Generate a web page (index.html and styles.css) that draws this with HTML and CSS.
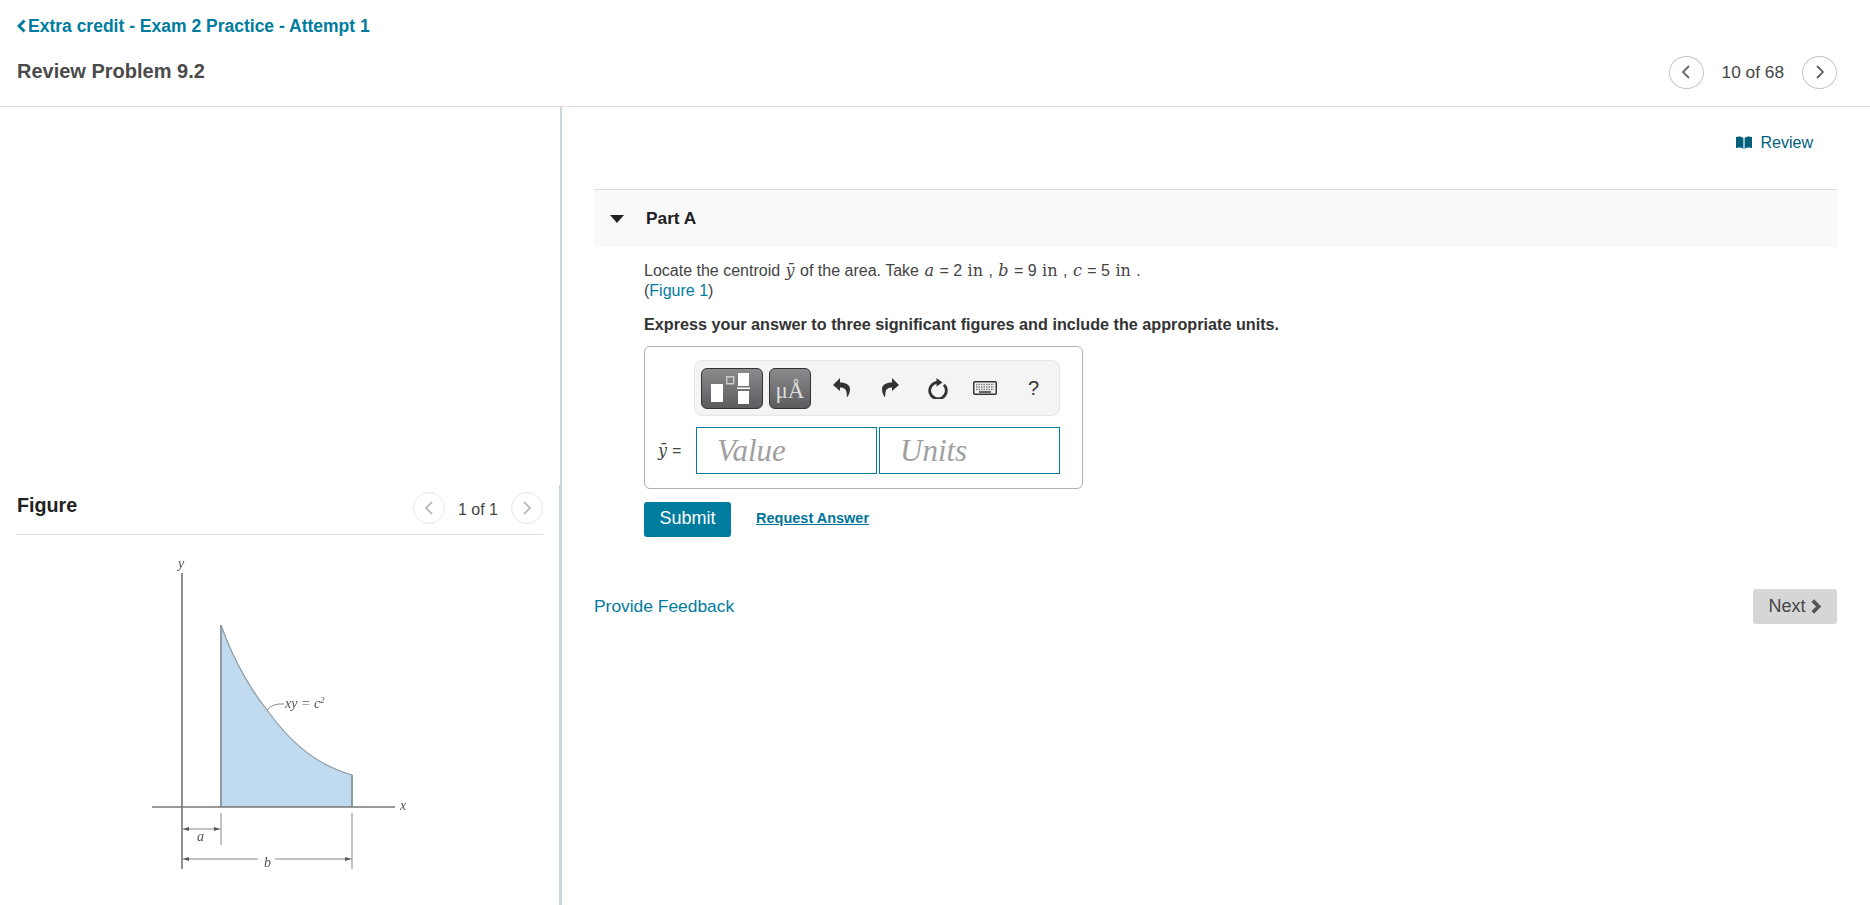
FILE: index.html

```html
<!DOCTYPE html>
<html lang="en">
<head>
    <meta charset="UTF-8">
    <title>Review Problem 9.2</title>
    <link rel="stylesheet" href="styles.css">
</head>
<body>

    <header class="top-bar">
        <a class="back-link" href="#">
            <svg class="back-chevron" viewBox="0 0 9 14"><path d="M7.500 1.500 2 7l5.500 5.500" /></svg>Extra credit - Exam 2 Practice - Attempt 1
        </a>
        <div class="title-row">
            <h1>Review Problem 9.2</h1>
            <div class="pager">
                <button class="round-btn"><svg viewBox="0 0 12 16"><path d="M9 2 3 8l6 6" /></svg></button>
                <span>10 of 68</span>
                <button class="round-btn"><svg viewBox="0 0 12 16"><path d="M3 2l6 6-6 6" /></svg></button>
            </div>
        </div>
    </header>

    <main class="panes">
        <aside class="figure-pane">
            <div class="figure-panel">
                <div class="figure-head">
                    <h2>Figure</h2>
                    <div class="figure-pager">
                        <button class="round-btn faint"><svg viewBox="0 0 12 16"><path d="M9 2 3 8l6 6" /></svg></button>
                        <span class="figure-count">1 of 1</span>
                        <button class="round-btn faint"><svg viewBox="0 0 12 16"><path d="M3 2l6 6-6 6" /></svg></button>
                    </div>
                </div>
                <svg class="figure-art" viewBox="150 555 260 320" width="260" height="320">
                    <path class="area" d="M221 625C235 665 255 695 267 710C285 735 310 763 352 775V807H221Z" />
                    <path class="curve" d="M221 625C235 665 255 695 267 710C285 735 310 763 352 775" />
                    <path class="edge" d="M221 625V807M352 775V807" />
                    <path class="axis" d="M182 573V869" />
                    <path class="axis-thin" d="M152 807H395" />
                    <path class="dim" d="M221 813V845M352 813V869M183 829H220M183 859H258M275 859H352" />
                    <path class="dim" d="M267 710Q273 703 284 704" />
                    <path class="arrow" d="M183 829l6-2v4zM220 829l-6-2v4zM183 859l6-2v4zM351 859l-6-2v4z" />
                    <text class="fig-label" x="178" y="568">y</text>
                    <text class="fig-label" x="285" y="708">xy = c<tspan class="fig-sup" dy="-5">2</tspan></text>
                    <text class="fig-label" x="400" y="810">x</text>
                    <text class="fig-label" x="197" y="841">a</text>
                    <text class="fig-label" x="264" y="867">b</text>
                </svg>
            </div>
        </aside>

        <section class="work-pane">
            <div class="review-row">
                <a class="review-link" href="#">
                    <svg class="book" viewBox="0 0 16 14"><path d="M0 1C3 0 6 .5 7.400 2V13C6 11.500 3 11 0 12ZM16 1C13 0 10 .5 8.600 2V13C10 11.500 13 11 16 12Z" /></svg>Review
                </a>
            </div>

            <div class="part-head">
                <svg class="caret" viewBox="0 0 14 8"><path d="M0 0h14L7 8z" /></svg>
                <span>Part A</span>
            </div>

            <div class="part-body">
                <p class="question">
                    Locate the centroid <i class="math">&#563;</i> of the area. Take
                    <i class="math">a</i> = 2 <span class="math">in</span> ,
                    <i class="math">b</i> = 9 <span class="math">in</span> ,
                    <i class="math">c</i> = 5 <span class="math">in</span> .<br>
                    (<a href="#">Figure 1</a>)
                </p>
                <p class="instruction">Express your answer to three significant figures and include the appropriate units.</p>

                <div class="answer-box">
                    <div class="toolbar">
                        <button class="tool-btn templates">
                            <svg viewBox="1 1 60 39">
                                <path class="tpl-fill" d="M10 16h12v18H10zM37 5h11v13H37zM37 23h11v13H37zM36 19.500h13v1.500H36z" />
                                <path class="tpl-open" d="M25.700 8.700h7v7h-7z" />
                            </svg>
                        </button>
                        <button class="tool-btn units">&mu;&Aring;</button>
                        <svg class="tool-icon undo" viewBox="0 0 17 20"><path d="M7 0 0 7l7 6V9.500c4 0 6 1.500 6.500 4.500l.5 5.500c2-2.500 3-5.500 3-8.500 0-4-4-6.500-10-6.500z" /></svg>
                        <svg class="tool-icon redo" viewBox="0 0 17 20"><path d="M10 0l7 7-7 6V9.500c-4 0-6 1.500-6.500 4.500L3 19.500C1 17 0 14 0 11c0-4 4-6.500 10-6.500z" /></svg>
                        <svg class="tool-icon reset" viewBox="0 0 20 21"><path class="ring" d="M16 6.800A8.300 8.300 0 1 1 9 4.300" /><path d="M8.500 0l6 4.500-6 4z" /></svg>
                        <svg class="tool-kbd" viewBox="0 0 24 14">
                            <rect x="0.750" y="0.750" width="22.500" height="12.500" rx="1" />
                            <path d="M3 3.500h18M3 6h18M3 8.500h18" class="keys" />
                            <path d="M6 11h12" class="space" />
                        </svg>
                        <span class="tool-help">?</span>
                    </div>
                    <div class="answer-row">
                        <span class="answer-label"><i class="math">&#563;</i> =</span>
                        <div class="answer-field">Value</div>
                        <div class="answer-field">Units</div>
                    </div>
                </div>

                <div class="actions">
                    <button class="submit-btn">Submit</button>
                    <a class="request-link" href="#">Request Answer</a>
                </div>
            </div>

            <div class="bottom-row">
                <a class="feedback-link" href="#">Provide Feedback</a>
                <button class="next-btn">Next<svg viewBox="0 0 10 14"><path d="M2 1.500 7.500 7 2 12.500" /></svg></button>
            </div>
        </section>
    </main>

</body>
</html>
```

FILE: styles.css

```css
* {
    box-sizing: border-box;
}

body {
    margin: 0;
    height: 905px;
    overflow: hidden;
    background-color: #fff;
    font-family: 'Liberation Sans', Arial, sans-serif;
    font-size: 16px;
    color: #444;
}

a {
    color: #007c9e;
    text-decoration: none;
}

button {
    font-family: inherit;
    cursor: pointer;
}

/* top bar */
.top-bar {
    height: 107px;
    padding: 16px 33px 0 17px;
    border-bottom: 1px solid #e0e0e0;
}

.back-link {
    display: flex;
    align-items: center;
    height: 20px;
    font-size: 17.500px;
    font-weight: bold;
    color: #007c9e;
}

.back-chevron {
    width: 9px;
    height: 14px;
    margin-right: 2px;
    fill: none;
    stroke: #007c9e;
    stroke-width: 3;
}

.title-row {
    display: flex;
    justify-content: space-between;
    align-items: center;
    margin-top: 18px;
    height: 36px;
}

h1 {
    margin: 0 0 2px;
    font-size: 20px;
    color: #4a4a4a;
}

.pager {
    display: flex;
    align-items: center;
    gap: 18px;
    font-size: 17.300px;
    color: #444;
}

.round-btn {
    display: flex;
    align-items: center;
    justify-content: center;
    width: 35px;
    height: 33px;
    padding: 0;
    background: #fff;
    border: 1px solid #c4c4c4;
    border-radius: 50%;
}

.round-btn svg {
    width: 12px;
    height: 16px;
    fill: none;
    stroke: #666;
    stroke-width: 1.800;
}

.round-btn.faint {
    width: 32px;
    height: 32px;
    border-color: #e6e6e6;
}

.round-btn.faint svg {
    stroke: #bbb;
}

/* panes */
.panes {
    display: grid;
    grid-template-columns: 560px 1fr;
    height: 798px;
}

.figure-panel {
    height: 420px;
    margin-top: 378px;
    padding: 0 16px;
    border-right: 1px solid #c8d6e0;
}

.figure-head {
    display: flex;
    justify-content: space-between;
    align-items: flex-start;
    height: 50px;
    border-bottom: 1px solid #ddd;
}

h2 {
    margin: 9px 0 0 1px;
    font-size: 19.700px;
    color: #222;
}

.figure-pager {
    display: flex;
    align-items: center;
    gap: 13px;
    margin-top: 7px;
    font-size: 16px;
    color: #444;
}

.figure-count {
    padding-top: 4px;
}

.figure-art {
    display: block;
    margin: 20px 0 0 134px;
    overflow: visible;
    filter: blur(0.4px);
}

.area {
    fill: #c0daef;
}

.curve {
    fill: none;
    stroke: #8f9ba3;
    stroke-width: 1.200;
}

.edge {
    fill: none;
    stroke: #8f9ba3;
    stroke-width: 2;
}

.axis {
    fill: none;
    stroke: #8e9094;
    stroke-width: 2;
}

.axis-thin {
    fill: none;
    stroke: #777;
    stroke-width: 1.300;
}

.dim {
    fill: none;
    stroke: #888;
    stroke-width: 1;
}

.arrow {
    fill: #555;
}

.fig-label {
    font-family: 'Liberation Serif', serif;
    font-style: italic;
    font-size: 14px;
    fill: #555;
}

.fig-sup {
    font-size: 9px;
}

/* work pane */
.work-pane {
    padding: 0 33px 0 32px;
    border-left: 2px solid #c8d6e0;
}

.review-row {
    display: flex;
    justify-content: flex-end;
    height: 82px;
    padding: 27px 24px 0 0;
}

.review-link {
    display: flex;
    align-items: center;
    height: 18px;
    font-size: 16px;
    color: #00607c;
}

.book {
    width: 16px;
    height: 14px;
    margin-right: 9px;
    fill: #00607c;
}

.part-head {
    display: flex;
    align-items: center;
    height: 58px;
    padding-left: 16px;
    background-color: #f9f9f9;
    border-top: 1px solid #ddd;
    font-size: 17.300px;
    font-weight: bold;
    color: #222;
}

.caret {
    width: 14px;
    height: 8px;
    margin-right: 22px;
    fill: #222;
}

.part-body {
    padding: 14px 0 0 50px;
}

.part-body p {
    margin: 0;
}

.question {
    line-height: 20px;
    font-size: 16px;
    color: #444;
}

.math {
    margin: 0 1px;
    font-family: 'DejaVu Serif', serif;
    font-size: 16px;
    line-height: 1;
}

.instruction {
    margin-top: 14px !important;
    font-size: 16.200px;
    font-weight: bold;
    color: #333;
}

.answer-box {
    width: 439px;
    height: 143px;
    margin-top: 12px;
    padding: 13px 22px 0 49px;
    background: #fff;
    border: 1px solid #b0b0b0;
    border-radius: 6px;
}

.toolbar {
    display: flex;
    align-items: center;
    height: 56px;
    padding-left: 6px;
    background-color: #f4f4f4;
    border: 1px solid #e6e6e6;
    border-radius: 8px;
}

.tool-btn {
    height: 41px;
    padding: 0;
    background: linear-gradient(#8b8b8e, #5c5c5e);
    border: 1px solid #333;
    border-radius: 6px;
    color: #fff;
}

.tool-btn.templates {
    width: 62px;
    margin-right: 6px;
}

.tool-btn.templates svg {
    display: block;
    width: 60px;
    height: 39px;
}

.tpl-fill {
    fill: #fff;
}

.tpl-open {
    fill: none;
    stroke: #ccc;
    stroke-width: 1.400;
}

.tool-btn.units {
    width: 42px;
    padding-top: 5px;
    font-family: 'Liberation Serif', serif;
    font-size: 23px;
    line-height: 1;
    color: #ddd;
}

.tool-icon {
    fill: #333;
}

.tool-icon.undo {
    width: 17px;
    height: 20px;
    margin-left: 22px;
}

.tool-icon.redo {
    width: 17px;
    height: 20px;
    margin-left: 32px;
}

.tool-icon.reset {
    width: 20px;
    height: 21px;
    margin-left: 29px;
}

.ring {
    fill: none;
    stroke: #333;
    stroke-width: 2.800;
}

.tool-kbd {
    width: 24px;
    height: 14px;
    margin-left: 25px;
    fill: none;
    stroke: #333;
    stroke-width: 1.500;
}

.keys {
    stroke-dasharray: 1.500 1;
    stroke-width: 1.500;
    stroke: #777;
}

.tool-help {
    margin-left: 31px;
    font-size: 20px;
    color: #333;
}

.answer-row {
    display: flex;
    align-items: center;
    margin: 11px 0 0 -50px;
}

.answer-label {
    width: 52px;
    padding-left: 13px;
    font-size: 15.500px;
    color: #444;
}

.answer-field {
    width: 181px;
    height: 47px;
    margin-right: 2px;
    padding: 5px 0 0 20px;
    border: 1px solid #007c9e;
    font-family: 'Liberation Serif', serif;
    font-style: italic;
    font-size: 31px;
    color: #a0a0a0;
}

.answer-field:last-child {
    margin-right: 0;
}

.actions {
    display: flex;
    align-items: center;
    margin-top: 13px;
}

.submit-btn {
    width: 87px;
    height: 35px;
    padding: 0 0 2px;
    background-color: #007c9e;
    border: none;
    border-radius: 3px;
    font-size: 18px;
    color: #fff;
}

.request-link {
    margin: -4px 0 0 25px;
    font-size: 14.500px;
    font-weight: bold;
    text-decoration: underline;
    color: #00749a;
}

.bottom-row {
    display: flex;
    justify-content: space-between;
    align-items: center;
    margin-top: 52px;
}

.feedback-link {
    font-size: 17.400px;
}

.next-btn {
    display: flex;
    align-items: center;
    justify-content: center;
    gap: 4px;
    width: 84px;
    height: 35px;
    padding: 0;
    background-color: #d6d6d6;
    border: none;
    border-radius: 3px;
    font-size: 18px;
    color: #444;
}

.next-btn svg {
    width: 12px;
    height: 15px;
    fill: none;
    stroke: #555;
    stroke-width: 3.400;
}
```
